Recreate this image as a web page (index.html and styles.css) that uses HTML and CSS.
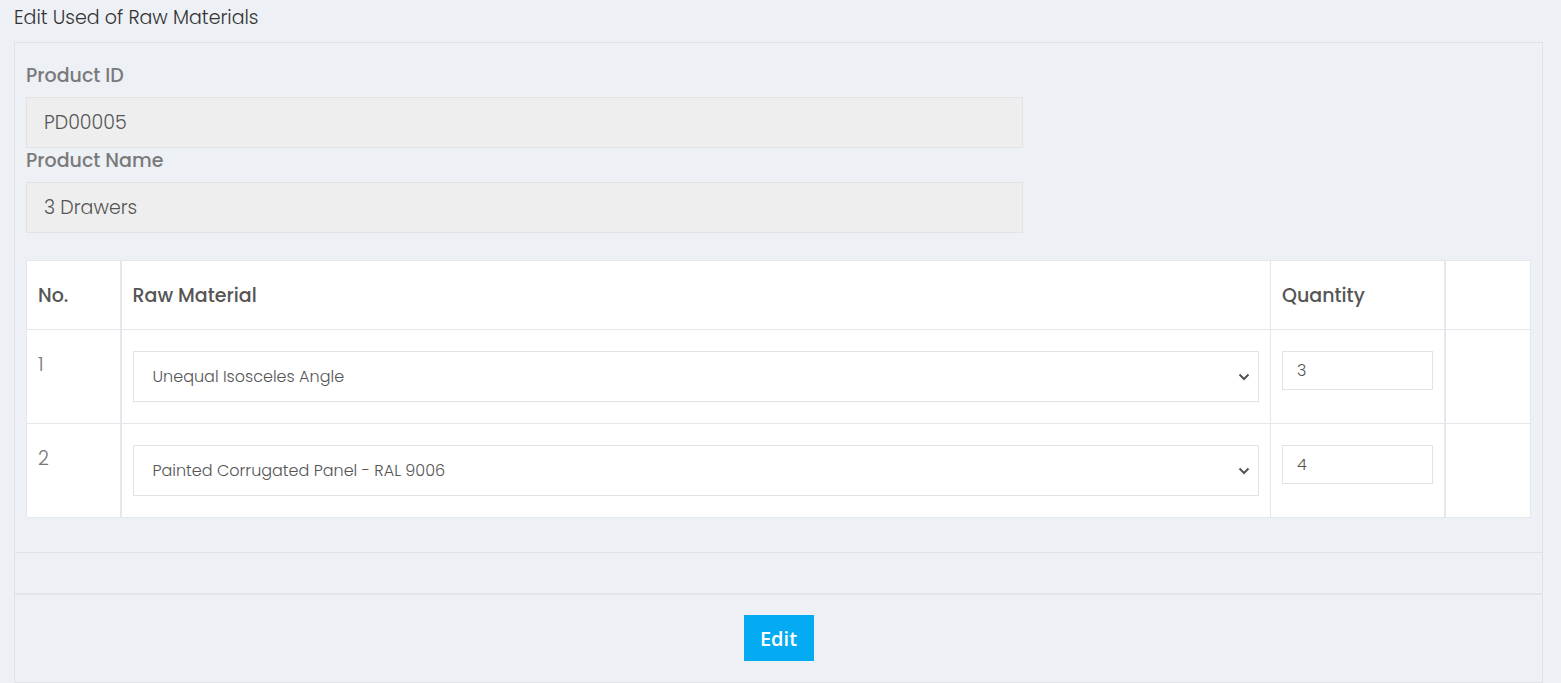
FILE: index.html
```html
<!DOCTYPE html>
<html lang="en">

<head>
    <meta charset="UTF-8">
    <meta name="viewport" content="width=device-width, initial-scale=1.0">
    <title>Edit Used of Raw Materials</title>
    <link rel="stylesheet" href="styles.css">
</head>

<body>
    <div class="page">
        <h4 class="page-title">Edit Used of Raw Materials</h4>
        <div class="card">
            <form>
                <div class="card-body">
                    <div class="form-group">
                        <label>Product ID</label>
                        <input type="text" class="form-control" value="PD00005" readonly>
                    </div>
                    <div class="form-group">
                        <label>Product Name</label>
                        <input type="text" class="form-control" value="3 Drawers" readonly>
                    </div>

                    <table class="materials">
                        <colgroup>
                            <col class="col-no">
                            <col class="col-material">
                            <col class="col-qty">
                            <col class="col-extra">
                        </colgroup>
                        <thead>
                            <tr>
                                <th class="thick-right">No.</th>
                                <th>Raw Material</th>
                                <th class="thick-right">Quantity</th>
                                <th rowspan="2"></th>
                            </tr>
                        </thead>
                        <tbody>
                            <tr>
                                <td class="thick-right">1</td>
                                <td>
                                    <div class="select-wrap">
                                        <select class="custom-select">
                                            <option>Unequal Isosceles Angle</option>
                                        </select>
                                        <svg class="chevron" width="12" height="8" viewBox="0 0 12 8">
                                            <path d="M1.5 1.5 L6 6 L10.5 1.5" fill="none" stroke="#555" stroke-width="2" />
                                        </svg>
                                    </div>
                                </td>
                                <td class="thick-right"><input type="number" class="qty" value="3"></td>
                            </tr>
                            <tr>
                                <td class="thick-right">2</td>
                                <td>
                                    <div class="select-wrap">
                                        <select class="custom-select">
                                            <option>Painted Corrugated Panel - RAL 9006</option>
                                        </select>
                                        <svg class="chevron" width="12" height="8" viewBox="0 0 12 8">
                                            <path d="M1.5 1.5 L6 6 L10.5 1.5" fill="none" stroke="#555" stroke-width="2" />
                                        </svg>
                                    </div>
                                </td>
                                <td class="thick-right"><input type="number" class="qty" value="4"></td>
                                <td></td>
                            </tr>
                        </tbody>
                    </table>
                </div>
                <div class="card-spacer"></div>
                <div class="card-footer">
                    <button type="button" class="btn-edit">Edit</button>
                </div>
            </form>
        </div>
    </div>
</body>

</html>
```

FILE: styles.css
```css
* {
    margin: 0;
    padding: 0;
    box-sizing: border-box;
}

body {
    background: #edf0f5;
    font-family: 'Poppins', 'Inter', 'Open Sans', sans-serif;
    color: #555;
}

.page {
    padding: 5px 18px 0 14px;
}

.page-title {
    font-size: 19px;
    font-weight: 300;
    color: #333;
    line-height: 26px;
    margin-bottom: 11px;
}

.card {
    border: 1px solid #dfe3e8;
    background: #edf0f5;
}

.card-body {
    padding: 20px 11px 34px 11px;
    border-bottom: 1px solid #dfe3e8;
}

.form-group label {
    display: block;
    font-size: 19px;
    font-weight: 500;
    color: #7a7a7a;
    line-height: 26px;
    margin-bottom: 8px;
}

.form-control {
    display: block;
    width: 997px;
    height: 51px;
    border: 1px solid #e2e3e5;
    background: #eeeeee;
    padding: 0 17px;
    font-family: inherit;
    font-size: 19px;
    font-weight: 300;
    color: #555;
    outline: 0;
}

.materials {
    margin-top: 27px;
    width: 100%;
    table-layout: fixed;
    border-collapse: collapse;
    background: #fff;
    border: 1px solid #e4e7eb;
}

.col-no {
    width: 94px;
}

.col-qty {
    width: 174px;
}

.col-extra {
    width: 86px;
}

.materials th,
.materials td {
    border: 1px solid #e4e7eb;
    text-align: left;
    padding: 21px 11px;
}

.materials th {
    height: 69px;
    font-size: 19px;
    font-weight: 500;
    color: #555;
    padding: 0 11px;
    vertical-align: middle;
}

.materials td {
    height: 94px;
    vertical-align: top;
    font-size: 19px;
    font-weight: 300;
    color: #777;
    line-height: 27px;
}

.materials .thick-right {
    border-right: 2px solid #e4e7eb;
}

.select-wrap {
    position: relative;
}

.custom-select {
    display: block;
    width: 100%;
    height: 51px;
    border: 1px solid #e2e3e5;
    background: #fff;
    padding: 0 40px 0 19px;
    font-family: inherit;
    font-size: 16px;
    font-weight: 300;
    color: #555;
    appearance: none;
    -webkit-appearance: none;
    outline: 0;
}

.chevron {
    position: absolute;
    right: 9px;
    top: 22px;
    pointer-events: none;
}

.qty {
    display: block;
    width: 100%;
    height: 39px;
    border: 1px solid #e2e3e5;
    background: #fff;
    padding: 0 14px;
    font-family: inherit;
    font-size: 16px;
    font-weight: 300;
    color: #555;
    outline: 0;
    -moz-appearance: textfield;
}

.qty::-webkit-inner-spin-button,
.qty::-webkit-outer-spin-button {
    -webkit-appearance: none;
    margin: 0;
}

.card-spacer {
    height: 42px;
    border-bottom: 2px solid #e2e5ea;
}

.card-footer {
    padding: 20px 0 21px;
    display: flex;
    justify-content: center;
}

.btn-edit {
    width: 70px;
    height: 46px;
    border: 0;
    background: #04abf2;
    color: #fff;
    font-family: 'Open Sans', sans-serif;
    font-size: 20px;
    font-weight: 600;
    cursor: pointer;
}
```
